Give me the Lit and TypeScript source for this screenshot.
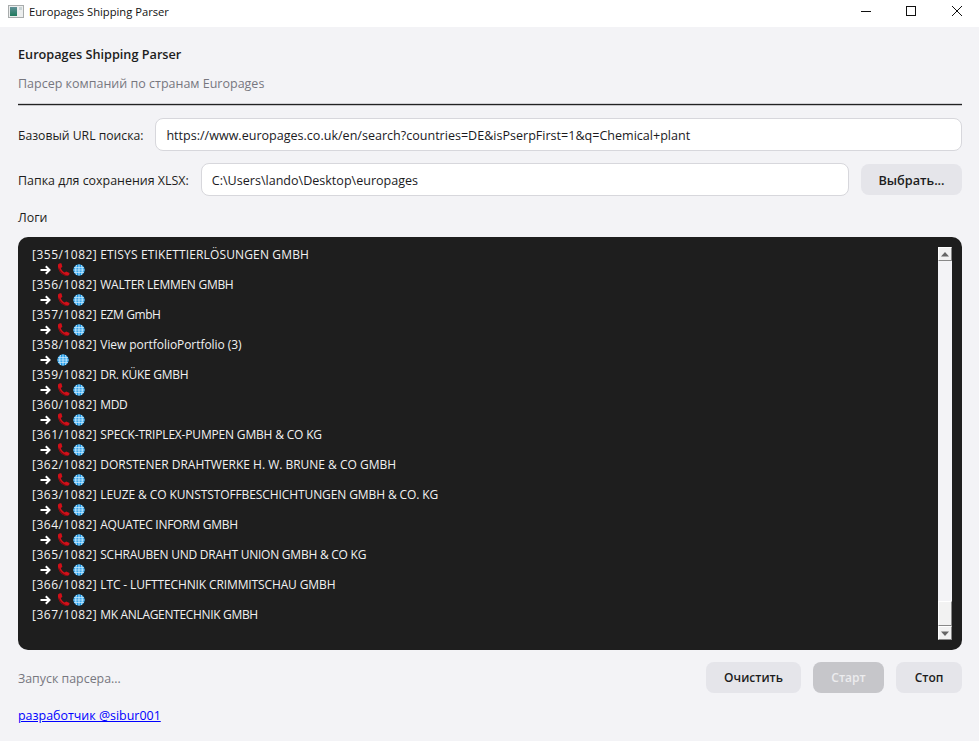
import { LitElement, html, css, svg } from "lit";
import { customElement } from "lit/decorators.js";

const rows: [string, string, boolean, number][] = [
  ["[355/1082]", "ETISYS ETIKETTIERLÖSUNGEN GMBH", true, 0.14],
  ["[356/1082]", "WALTER LEMMEN GMBH", true, -0.28],
  ["[357/1082]", "EZM GmbH", true, -0.4],
  ["[358/1082]", "View portfolioPortfolio (3)", false, -0.06],
  ["[359/1082]", "DR. KÜKE GMBH", true, -0.29],
  ["[360/1082]", "MDD", true, -0.4],
  ["[361/1082]", "SPECK-TRIPLEX-PUMPEN GMBH & CO KG", true, -0.18],
  ["[362/1082]", "DORSTENER DRAHTWERKE H. W. BRUNE & CO GMBH", true, -0.01],
  ["[363/1082]", "LEUZE & CO KUNSTSTOFFBESCHICHTUNGEN GMBH & CO. KG", true, -0.1],
  ["[364/1082]", "AQUATEC INFORM GMBH", true, -0.27],
  ["[365/1082]", "SCHRAUBEN UND DRAHT UNION GMBH & CO KG", true, -0.24],
  ["[366/1082]", "LTC - LUFTTECHNIK CRIMMITSCHAU GMBH", true, -0.12],
];

const arrow = html`<svg class="ic arrow" viewBox="0 0 12 12" width="12" height="12"><path d="M.5 6h8.500M5.800 2.300 9.500 6 5.800 9.700" fill="none" stroke="#fff" stroke-width="2"/></svg>`;
const phone = html`<svg class="ic phone" viewBox="0 0 13 13" width="13" height="13"><path d="M1 1.800C1.700.500 3.200 0 4.500.500L5.400 3.900 3.800 4.900C4.500 6.900 5.900 8.500 7.700 9.400L9.200 8.400 12.500 10C12.600 11.500 11.700 12.700 10.200 12.800 5 12.900.3 7.200 1 1.800Z" fill="#d01019"/><path d="M1.800 4.500C3 8 6 11 9.500 12.200L10.200 12.800C5.300 12.900 1 8 1.800 4.500Z" fill="#7d0a10"/></svg>`;
const globe = html`<svg class="ic" viewBox="0 0 12 12" width="12" height="12"><circle cx="6" cy="6" r="5.700" fill="#1b9bea"/>${svg`<path d="M1 3.700h10M.4 6h11.200M1 8.300h10M6 .4v11.200M3.500 1C2.500 4 2.500 8 3.500 11M8.500 1C9.500 4 9.500 8 8.500 11" fill="none" stroke="#e4f4ff" stroke-width=".8"/>`}</svg>`;

@customElement("app-root")
export class AppRoot extends LitElement {
  static styles = css`
    :host {
      display: flex;
      flex-direction: column;
      width: 979px;
      height: 741px;
      overflow: hidden;
      background: #f3f3f6;
      font-family: "Open Sans", "Noto Sans", sans-serif;
      font-size: 12.4px;
      color: #1d1d20;
    }
    * { box-sizing: border-box; }
    .titlebar {
      height: 27px;
      flex: none;
      background: #fff;
      display: flex;
      align-items: flex-start;
      padding-left: 8px;
      color: #111;
    }
    .appicon { margin: 5px 5px 0 0; flex: none; }
    .titlebar .name { flex: 1; font-size: 11.2px; line-height: 24px; }
    .winbtns { display: flex; margin-right: -1px; }
    .winbtn { width: 46px; height: 27px; display: flex; justify-content: center; padding-top: 6px; }
    .winbtn.min { padding-left: 2px; }
    .content {
      flex: 1;
      display: flex;
      flex-direction: column;
      padding: 17px 17px 0 18px;
    }
    .heading { font-weight: 600; font-size: 12.7px; line-height: 20px; color: #1c1c20; }
    .sub { margin-top: 10px; line-height: 20px; font-size: 12.5px; color: #77777f; }
    .rule { height: 1px; background: #222; margin-top: 10px; box-shadow: 0 1px 0 #c4c4c8, 0 -1px 0 #d0d0d4; }
    .row { display: flex; align-items: center; }
    .r1 { margin-top: 13px; gap: 12px; }
    .r2 { margin-top: 12px; gap: 12px; }
    .lab { white-space: nowrap; padding-top: 1px; }
    .lab.url { font-size: 12.2px; }
    .lab.dir { font-size: 12.45px; }
    .field {
      flex: 1;
      height: 33px;
      background: #fff;
      border: 1px solid #d7d7dc;
      border-radius: 8px;
      padding: 1px 10px 0;
      display: flex;
      align-items: center;
      font-size: 12.55px;
      color: #1a1a1e;
      white-space: nowrap;
    }
    .btn {
      height: 31px;
      border-radius: 8px;
      background: #e5e5ea;
      display: flex;
      align-items: center;
      justify-content: center;
      font-weight: 600;
      font-size: 12px;
      color: #1c1c20;
      flex: none;
    }
    .choose { width: 101px; font-size: 12.7px; }
    .logs-label { margin-top: 12px; line-height: 20px; }
    .panel {
      margin-top: 9px;
      height: 413px;
      flex: none;
      background: #1e1e1e;
      border-radius: 10px;
      display: flex;
      padding: 10px 10px 10px 14px;
      color: #f2f2f2;
      font-size: 12px;
    }
    .log { flex: 1; overflow: hidden; }
    .line { height: 15px; line-height: 15px; white-space: nowrap; }
    .idx { letter-spacing: 0.5px; margin-right: 3px; }
    .icons { display: flex; align-items: center; padding-left: 8px; }
    .ic { flex: none; display: block; }
    .arrow { margin-right: 5px; }
    .phone { margin-right: 3px; }
    .sb {
      width: 14px;
      flex: none;
      background: #f3f3f6;
      display: flex;
      flex-direction: column;
    }
    .sbbtn {
      width: 14px;
      height: 14px;
      background: #f2f2f2;
      border-top: 1px solid #fff;
      border-left: 1px solid #fff;
      border-right: 1px solid #888;
      border-bottom: 1px solid #888;
      display: flex;
      align-items: center;
      justify-content: center;
      flex: none;
    }
    .track { flex: 1; display: flex; flex-direction: column; justify-content: flex-end; }
    .thumb {
      height: 25px;
      background: #f2f2f2;
      border-top: 1px solid #fff;
      border-left: 1px solid #fff;
      border-right: 1px solid #888;
      border-bottom: 1px solid #888;
    }
    .bottom { margin-top: 12px; gap: 12px; }
    .status { flex: 1; color: #77777f; padding-top: 2px; }
    .clear { width: 95px; }
    .start { width: 71px; background: #c6c6ca; color: #ececee; }
    .stop { width: 66px; }
    .link { margin-top: 13px; line-height: 20px; font-size: 12.45px; color: #0000ff; text-decoration: underline; align-self: flex-start; }
  `;

  render() {
    return html`
      <div class="titlebar">
        <svg class="appicon" width="16" height="13" viewBox="0 0 16 13">
          <defs><linearGradient id="ig" x1="0" y1="0" x2="0" y2="1"><stop offset="0" stop-color="#5f8f96"/><stop offset="1" stop-color="#1f7a5c"/></linearGradient></defs>
          <rect x=".5" y=".5" width="15" height="12" fill="#eceeee" stroke="#a8acac"/>
          <rect x="2" y="2" width="7" height="9" fill="url(#ig)"/>
          <rect x="11" y="2" width="3" height="3" fill="#c9d4d6"/>
        </svg>
        <span class="name">Europages Shipping Parser</span>
        <div class="winbtns">
          <div class="winbtn min"><svg width="10" height="10" viewBox="0 0 10 10"><path d="M0 5.500h10" stroke="#111" fill="none"/></svg></div>
          <div class="winbtn"><svg width="10" height="10" viewBox="0 0 10 10"><rect x=".5" y=".5" width="9" height="9" stroke="#111" fill="none"/></svg></div>
          <div class="winbtn"><svg width="10" height="10" viewBox="0 0 10 10"><path d="M0 0l10 10M10 0 0 10" stroke="#111" fill="none"/></svg></div>
        </div>
      </div>
      <div class="content">
        <div class="heading">Europages Shipping Parser</div>
        <div class="sub">Парсер компаний по странам Europages</div>
        <div class="rule"></div>
        <div class="row r1">
          <span class="lab url">Базовый URL поиска:</span>
          <div class="field">https://www.europages.co.uk/en/search?countries=DE&amp;isPserpFirst=1&amp;q=Chemical+plant</div>
        </div>
        <div class="row r2">
          <span class="lab dir">Папка для сохранения XLSX:</span>
          <div class="field">C:\\Users\\lando\\Desktop\\europages</div>
          <div class="btn choose">Выбрать...</div>
        </div>
        <div class="logs-label">Логи</div>
        <div class="panel">
          <div class="log">
            ${rows.map(
              ([i, t, hasPhone, ls]) => html`
                <div class="line"><span class="idx">${i}</span><span style="letter-spacing:${ls}px">${t}</span></div>
                <div class="line icons">${arrow}${hasPhone ? phone : ""}${globe}</div>
              `
            )}
            <div class="line"><span class="idx">[367/1082]</span><span style="letter-spacing:-0.33px">MK ANLAGENTECHNIK GMBH</span></div>
          </div>
          <div class="sb">
            <div class="sbbtn"><svg width="8" height="5" viewBox="0 0 8 5"><path d="M4 0 8 4.500H0Z" fill="#666"/></svg></div>
            <div class="track"><div class="thumb"></div></div>
            <div class="sbbtn"><svg width="8" height="5" viewBox="0 0 8 5"><path d="M0 .5h8L4 5Z" fill="#666"/></svg></div>
          </div>
        </div>
        <div class="row bottom">
          <span class="status">Запуск парсера...</span>
          <div class="btn clear">Очистить</div>
          <div class="btn start">Старт</div>
          <div class="btn stop">Стоп</div>
        </div>
        <a class="link">разработчик @sibur001</a>
      </div>
    `;
  }
}
